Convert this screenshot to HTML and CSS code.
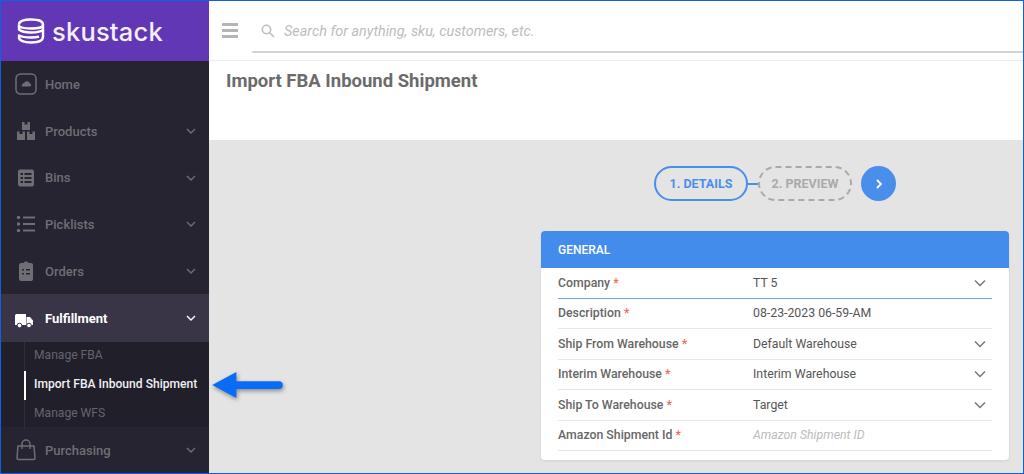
FILE: index.html
```html
<!DOCTYPE html>
<html lang="en">
<head>
  <meta charset="UTF-8">
  <title>Import FBA Inbound Shipment</title>
  <link rel="stylesheet" href="styles.css">
</head>
<body>

  <div class="frame">
    <aside class="sidebar">
      <div class="brand">
        <svg class="brand-icon" viewBox="0 0 28 26" fill="none" stroke="#fff" stroke-width="2.4" stroke-linejoin="round">
          <path d="M2 6.500C2 3 7 1.500 14 1.500S26 3 26 6.500 21 10.500 14 10.500C9 10.500 5 10 2 8.500"/>
          <path d="M2 6.500v5C5 14 9 14.500 14 14.500s9-.5 12-2.500V6.500"/>
          <path d="M26 12v6.500C26 22.500 21 24.500 14 24.500S2 22.500 2 19.500v-2C5 19 9 19.500 14 19.500c3 0 6-.2 8-.8"/>
        </svg>
        <span class="brand-name">skustack</span>
      </div>

      <nav class="menu">
        <a class="menu-item">
          <svg class="menu-icon" viewBox="0 0 22 22" fill="none" stroke="currentColor" stroke-width="1.500">
            <rect x="1" y="1" width="20" height="20" rx="4.500"/>
            <path d="M7 13.500h8c1.600 0 1.600-3-.3-3-.3-2.700-4.700-3-5.200-.7-1.600-.5-3.500 3.700-2.500 3.700z" fill="currentColor" stroke="none"/>
          </svg>
          <span>Home</span>
        </a>
        <a class="menu-item">
          <svg class="menu-icon" viewBox="0 0 22 22" fill="currentColor" fill-rule="evenodd">
            <path d="M7 2h2.500v2.500h3V2H15v8H7zM2 11.500h2.500V14h3v-2.500H10V20H2zM12 11.500h2.500V14h3v-2.500H20V20h-8z"/>
          </svg>
          <span>Products</span>
          <svg class="menu-chevron" viewBox="0 0 10 6"><path d="M1 1l4 4 4-4"/></svg>
        </a>
        <a class="menu-item">
          <svg class="menu-icon" viewBox="0 0 22 22" fill="currentColor">
            <path fill-rule="evenodd" d="M5 2.500h12a2 2 0 0 1 2 2v13a2 2 0 0 1-2 2H5a2 2 0 0 1-2-2v-13a2 2 0 0 1 2-2zM5.500 6v2h2.500V6zm4 0v2h7V6zm-4 4v2h2.500v-2zm4 0v2h7v-2zm-4 4v2h2.500v-2zm4 0v2h7v-2z"/>
          </svg>
          <span>Bins</span>
          <svg class="menu-chevron" viewBox="0 0 10 6"><path d="M1 1l4 4 4-4"/></svg>
        </a>
        <a class="menu-item">
          <svg class="menu-icon" viewBox="0 0 22 22" fill="currentColor">
            <circle cx="3.500" cy="4.500" r="1.700"/><circle cx="3.500" cy="11" r="1.700"/><circle cx="3.500" cy="17.500" r="1.700"/>
            <path d="M8 3.500h12v2H8zM8 10h12v2H8zM8 16.500h12v2H8z"/>
          </svg>
          <span>Picklists</span>
          <svg class="menu-chevron" viewBox="0 0 10 6"><path d="M1 1l4 4 4-4"/></svg>
        </a>
        <a class="menu-item">
          <svg class="menu-icon" viewBox="0 0 22 22" fill="currentColor">
            <path fill-rule="evenodd" d="M8.500 3c.2-2 4.800-2 5 0H16a2 2 0 0 1 2 2v14a2 2 0 0 1-2 2H6a2 2 0 0 1-2-2V5a2 2 0 0 1 2-2zM7 9v1.500h2V9zm4 0v1.500h4V9zm-4 4v1.500h2V13zm4 0v1.500h4V13z"/>
          </svg>
          <span>Orders</span>
          <svg class="menu-chevron" viewBox="0 0 10 6"><path d="M1 1l4 4 4-4"/></svg>
        </a>
        <a class="menu-item active">
          <svg class="menu-icon" viewBox="0 0 22 22" fill="currentColor">
            <path d="M0 8.500A1.500 1.500 0 0 1 1.500 7H11v11H0zM11.500 10H15l3 3.500V18h-6.500z"/>
            <circle cx="4.500" cy="18.500" r="2.300" stroke="#3a3546"/><circle cx="14" cy="18.500" r="2.300" stroke="#3a3546"/>
          </svg>
          <span>Fulfillment</span>
          <svg class="menu-chevron" viewBox="0 0 10 6"><path d="M1 1l4 4 4-4"/></svg>
        </a>
        <div class="submenu">
          <a class="submenu-item">Manage FBA</a>
          <a class="submenu-item current">Import FBA Inbound Shipment</a>
          <a class="submenu-item">Manage WFS</a>
        </div>
        <a class="menu-item">
          <svg class="menu-icon" viewBox="0 0 22 22" fill="none" stroke="currentColor" stroke-width="1.500">
            <path d="M3 7h16l1 12a1.500 1.500 0 0 1-1.500 1.500h-15A1.500 1.500 0 0 1 2 19z"/>
            <path d="M7 10V5a4 4 0 0 1 8 0v5"/>
          </svg>
          <span>Purchasing</span>
          <svg class="menu-chevron" viewBox="0 0 10 6"><path d="M1 1l4 4 4-4"/></svg>
        </a>
      </nav>
    </aside>

    <div class="content">
      <header class="topbar">
        <div class="hamburger"><i></i><i></i><i></i></div>
        <div class="search">
          <svg class="search-icon" viewBox="0 0 14 14" fill="none" stroke="#bdbdbd" stroke-width="1.600">
            <circle cx="5.500" cy="5.500" r="4.200"/><path d="M8.700 8.700l4.300 4.300"/>
          </svg>
          <span>Search for anything, sku, customers, etc.</span>
        </div>
      </header>

      <div class="page-head">
        <h1>Import FBA Inbound Shipment</h1>
      </div>

      <main class="page-body">
        <div class="stepper">
          <div class="step step-on">1. DETAILS</div>
          <div class="step-line"></div>
          <div class="step step-off">2. PREVIEW</div>
          <div class="step-next">
            <svg viewBox="0 0 8 10" fill="none" stroke="#fff" stroke-width="1.800"><path d="M2 1l4 4-4 4"/></svg>
          </div>
        </div>

        <section class="card">
          <div class="card-title">GENERAL</div>
          <div class="form-row focused">
            <label>Company <b>*</b></label>
            <span class="value">TT 5</span>
            <svg class="row-chevron" viewBox="0 0 12 8"><path d="M1 1.500l5 5 5-5"/></svg>
          </div>
          <div class="form-row">
            <label>Description <b>*</b></label>
            <span class="value">08-23-2023 06-59-AM</span>
          </div>
          <div class="form-row">
            <label>Ship From Warehouse <b>*</b></label>
            <span class="value">Default Warehouse</span>
            <svg class="row-chevron" viewBox="0 0 12 8"><path d="M1 1.500l5 5 5-5"/></svg>
          </div>
          <div class="form-row">
            <label>Interim Warehouse <b>*</b></label>
            <span class="value">Interim Warehouse</span>
            <svg class="row-chevron" viewBox="0 0 12 8"><path d="M1 1.500l5 5 5-5"/></svg>
          </div>
          <div class="form-row">
            <label>Ship To Warehouse <b>*</b></label>
            <span class="value">Target</span>
            <svg class="row-chevron" viewBox="0 0 12 8"><path d="M1 1.500l5 5 5-5"/></svg>
          </div>
          <div class="form-row">
            <label>Amazon Shipment Id <b>*</b></label>
            <span class="value placeholder">Amazon Shipment ID</span>
          </div>
        </section>
      </main>
    </div>

    <!-- flecha de la captura -->
    <svg class="callout-arrow" viewBox="0 0 74 30">
      <path d="M1 14.500L26 1v9.500h44a4 4 0 0 1 0 8H26V28z" fill="#0a6cf5"/>
    </svg>
  </div>

</body>
</html>
```

FILE: styles.css
```css
* {
  box-sizing: border-box;
}

html, body {
  margin: 0;
  height: 100%;
  overflow: hidden;
}

body {
  font-family: Roboto, "Liberation Sans", sans-serif;
  color: #555;
}

.frame {
  position: relative;
  display: flex;
  width: 1024px;
  height: 474px;
  border: 1px solid #0d62e0;
  overflow: hidden;
}

/* sidebar */
.sidebar {
  width: 208px;
  flex-shrink: 0;
  background-color: #252430;
}

.brand {
  display: flex;
  align-items: center;
  height: 60px;
  padding-left: 16px;
  gap: 7px;
  background-color: #6237b5;
}

.brand-icon {
  width: 28px;
  height: 26px;
}

.brand-name {
  font-family: Inter, sans-serif;
  font-size: 25.500px;
  font-weight: 500;
  color: #f4effb;
  letter-spacing: 0.2px;
}

.menu-item {
  display: flex;
  align-items: center;
  height: 46.700px;
  padding: 0 13px 0 14px;
  color: #6f6e74;
  font-size: 13px;
  font-weight: 500;
}

.menu-item span {
  margin-left: 8px;
  flex: 1;
}

.menu-icon {
  width: 22px;
  height: 22px;
  flex-shrink: 0;
}

.menu-chevron {
  width: 10px;
  height: 6px;
  fill: none;
  stroke: currentColor;
  stroke-width: 1.400;
}

.menu-item.active {
  height: 47.500px;
  background-color: #3a3546;
  color: #fff;
  font-weight: 700;
}

.submenu {
  height: 85px;
  background-color: #201f2a;
}

.submenu-item {
  display: block;
  height: 29px;
  line-height: 27px;
  margin-left: 23px;
  padding-left: 9px;
  border-left: 1px solid #2e2d39;
  color: #66656c;
  font-size: 12.100px;
}

.submenu-item.current {
  border-left: 2px solid #fff;
  padding-left: 8px;
  color: #f1f1f3;
  font-weight: 500;
}

/* cabecera */
.content {
  flex: 1;
  display: flex;
  flex-direction: column;
  min-width: 0;
}

.topbar {
  display: flex;
  height: 60px;
  padding-left: 13px;
  background: #fff;
  border-bottom: 1px solid #eee;
}

.hamburger {
  display: flex;
  flex-direction: column;
  gap: 3px;
  width: 16px;
  margin-top: 22px;
}

.hamburger i {
  display: block;
  height: 3px;
  background-color: #b5b5b5;
}

.search {
  flex: 1;
  display: flex;
  align-items: center;
  height: 52px;
  margin-left: 14px;
  padding: 10px 0 0 9px;
  border-bottom: 2px solid #d4d4d4;
  color: #bdbdbd;
  font-size: 14.400px;
  font-style: italic;
}

.search-icon {
  width: 14px;
  height: 14px;
  margin-right: 9px;
}

.page-head {
  height: 79px;
  padding: 9px 17px;
  background: #fff;
}

h1 {
  margin: 0;
  font-size: 18.500px;
  font-weight: 700;
  line-height: 22px;
  color: #6b6b6b;
}

.page-body {
  flex: 1;
  padding: 26px 14px 0 332px;
  background-color: #e4e4e4;
}

/* pasos */
.stepper {
  display: flex;
  align-items: center;
  height: 35px;
  margin-left: 113px;
}

.step {
  display: flex;
  align-items: center;
  justify-content: center;
  height: 35px;
  border-radius: 18px;
  font-size: 12.500px;
  font-weight: 700;
}

.step-on {
  width: 94px;
  border: 2px solid #4a8eeb;
  color: #4a8eeb;
}

.step-line {
  width: 10px;
  height: 2px;
  background-color: #4a8eeb;
}

.step-off {
  width: 94px;
  border: 2px dashed #a9a9a9;
  color: #aaa;
}

.step-next {
  display: flex;
  align-items: center;
  justify-content: center;
  width: 35px;
  height: 35px;
  margin-left: 9px;
  border-radius: 50%;
  background-color: #4a8eeb;
}

.step-next svg {
  width: 8px;
  height: 10px;
}

/* formulario */
.card {
  height: 229px;
  margin-top: 30px;
  padding: 0 17px;
  background: #fff;
  border-radius: 4px;
  box-shadow: 0 1px 3px rgba(0, 0, 0, 0.08);
}

.card-title {
  display: flex;
  align-items: center;
  height: 37px;
  margin: 0 -17px;
  padding-left: 17px;
  border-radius: 4px 4px 0 0;
  background-color: #448cec;
  color: #fff;
  font-size: 12px;
  font-weight: 500;
}

.form-row {
  display: flex;
  align-items: center;
  height: 30.500px;
  border-bottom: 1px solid #e8e8e8;
  font-size: 12.300px;
}

.form-row label {
  width: 195px;
  font-weight: 500;
  color: #666;
}

.form-row b {
  color: #f0675f;
  font-weight: 500;
}

.form-row .value {
  flex: 1;
  color: #555;
}

.form-row .placeholder {
  color: #bcbcbc;
  font-style: italic;
}

.form-row.focused {
  border-bottom-color: #6a9ef2;
}

.row-chevron {
  width: 12px;
  height: 8px;
  margin-right: 6px;
  fill: none;
  stroke: #777;
  stroke-width: 1.500;
}

/* flecha encima de todo */
.callout-arrow {
  position: absolute;
  left: 210px;
  top: 370px;
  width: 72px;
  height: 29px;
  filter: drop-shadow(1px 2px 2px rgba(0, 0, 0, 0.4));
}
```
